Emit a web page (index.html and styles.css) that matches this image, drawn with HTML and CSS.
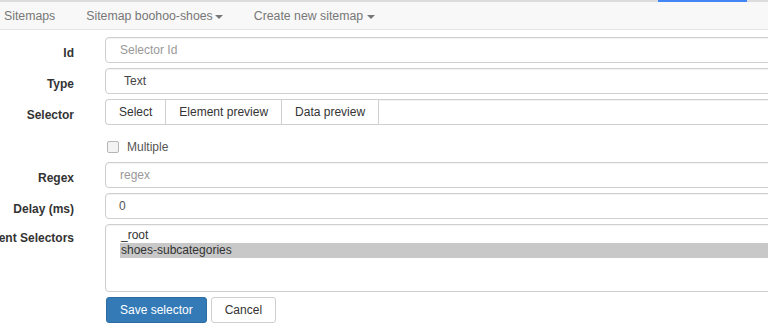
FILE: index.html
```html
<!DOCTYPE html>
<html>
<head>
<meta charset="utf-8">
<link rel="stylesheet" href="styles.css">
</head>
<body>
<div class="topline"><span class="tab-indicator"></span></div>
<nav class="navbar">
  <a class="nav-item">Sitemaps</a>
  <a class="nav-item">Sitemap boohoo-shoes<span class="caret tight"></span></a>
  <a class="nav-item">Create new sitemap <span class="caret"></span></a>
</nav>
<form class="form">
  <div class="row">
    <label class="label"><span>Id</span></label>
    <div class="control input placeholder">Selector Id</div>
  </div>
  <div class="row">
    <label class="label"><span>Type</span></label>
    <div class="control input select-box">Text</div>
  </div>
  <div class="row">
    <label class="label"><span>Selector</span></label>
    <div class="control input-group">
      <button type="button" class="btn btn-first">Select</button>
      <button type="button" class="btn">Element preview</button>
      <button type="button" class="btn">Data preview</button>
      <div class="input group-input"></div>
    </div>
  </div>
  <div class="row check-row">
    <div class="label"></div>
    <div class="check"><span class="checkbox"></span><span class="check-text">Multiple</span></div>
  </div>
  <div class="row">
    <label class="label"><span>Regex</span></label>
    <div class="control input placeholder">regex</div>
  </div>
  <div class="row">
    <label class="label"><span>Delay (ms)</span></label>
    <div class="control input value">0</div>
  </div>
  <div class="row list-row">
    <label class="label"><span>Parent Selectors</span></label>
    <div class="control listbox">
      <div class="option">_root</div>
      <div class="option selected">shoes-subcategories</div>
    </div>
  </div>
  <div class="row actions">
    <div class="label"></div>
    <div class="buttons">
      <button type="button" class="action primary">Save selector</button>
      <button type="button" class="action">Cancel</button>
    </div>
  </div>
</form>
</body>
</html>
```
FILE: styles.css
```css
html, body {
  margin: 0;
  padding: 0;
  background: #fff;
  overflow: hidden;
}
body {
  width: 768px;
  height: 332px;
  font-family: "Liberation Sans", Arial, sans-serif;
  font-size: 12px;
  color: #333;
}
.topline {
  height: 2px;
  background: #dcdcdc;
  display: flex;
}
.tab-indicator {
  display: block;
  margin-left: 658px;
  width: 89px;
  height: 2px;
  background: #4285f4;
}
.navbar {
  height: 27px;
  background: #f8f8f8;
  border-bottom: 1px solid #e4e4e4;
  display: flex;
  align-items: center;
  gap: 31px;
  padding-left: 4px;
}
.nav-item {
  color: #777;
  font-size: 12.3px;
  line-height: 27px;
  padding-top: 2px;
  white-space: nowrap;
  display: flex;
  align-items: center;
}
.caret {
  display: inline-block;
  width: 0;
  height: 0;
  border-top: 4px solid #777;
  border-left: 4px solid transparent;
  border-right: 4px solid transparent;
  margin-left: 4px;
  margin-top: 1px;
}
.caret.tight {
  margin-left: 2px;
}
.form {
  padding-top: 7px;
  width: 1000px;
}
.row {
  display: flex;
  align-items: flex-start;
  margin-bottom: 5px;
}
.label {
  width: 90px;
  flex: none;
  box-sizing: border-box;
  padding-right: 16px;
  display: flex;
  justify-content: flex-end;
  font-weight: bold;
  color: #333;
  white-space: nowrap;
  padding-top: 9px;
  line-height: 14px;
}
.control {
  margin-left: 15px;
  flex: 1;
}
.input {
  box-sizing: border-box;
  height: 26px;
  border: 1px solid #cfcfcf;
  border-radius: 4px;
  padding: 0 14px;
  line-height: 24px;
  color: #555;
  box-shadow: inset 0 1px 1px rgba(0,0,0,0.05);
}
.placeholder {
  color: #999;
}
.select-box {
  padding-left: 18px;
  color: #444;
}
.value {
  padding-left: 13px;
}
.input-group {
  display: flex;
  height: 26px;
}
.btn {
  font-family: inherit;
  font-size: 12px;
  color: #333;
  background: #fff;
  border: 1px solid #cfcfcf;
  border-right: none;
  padding: 0 13px;
  height: 26px;
  margin: 0;
  flex: none;
}
.btn-first {
  border-radius: 4px 0 0 4px;
}
.group-input {
  flex: 1;
  border-radius: 0 4px 4px 0;
}
.check-row {
  height: 32px;
  margin-bottom: 0;
  align-items: center;
}
.check {
  margin-left: 17px;
  display: flex;
  align-items: center;
  padding-top: 1px;
}
.checkbox {
  width: 10px;
  height: 10px;
  border: 1px solid #b5b5b5;
  border-radius: 2px;
  background: #f3f3f3;
}
.check-text {
  margin-left: 8px;
  color: #555;
}
.listbox {
  box-sizing: border-box;
  height: 68px;
  border: 1px solid #cfcfcf;
  border-radius: 4px;
  padding: 3px 0 0 14px;
  box-shadow: inset 0 1px 1px rgba(0,0,0,0.05);
}
.option {
  height: 15px;
  line-height: 15px;
  padding-left: 1px;
  color: #333;
}
.option.selected {
  background: #c8c8c8;
}
.list-row .label {
  padding-top: 7px;
}
.buttons {
  margin-left: 16px;
  display: flex;
  gap: 4px;
}
.action {
  font-family: inherit;
  font-size: 12px;
  height: 26px;
  padding: 0 13px;
  border: 1px solid #cfcfcf;
  border-radius: 3px;
  background: #fff;
  color: #333;
  margin: 0;
}
.action.primary {
  background: #337ab7;
  border-color: #2e6da4;
  color: #fff;
}
```
